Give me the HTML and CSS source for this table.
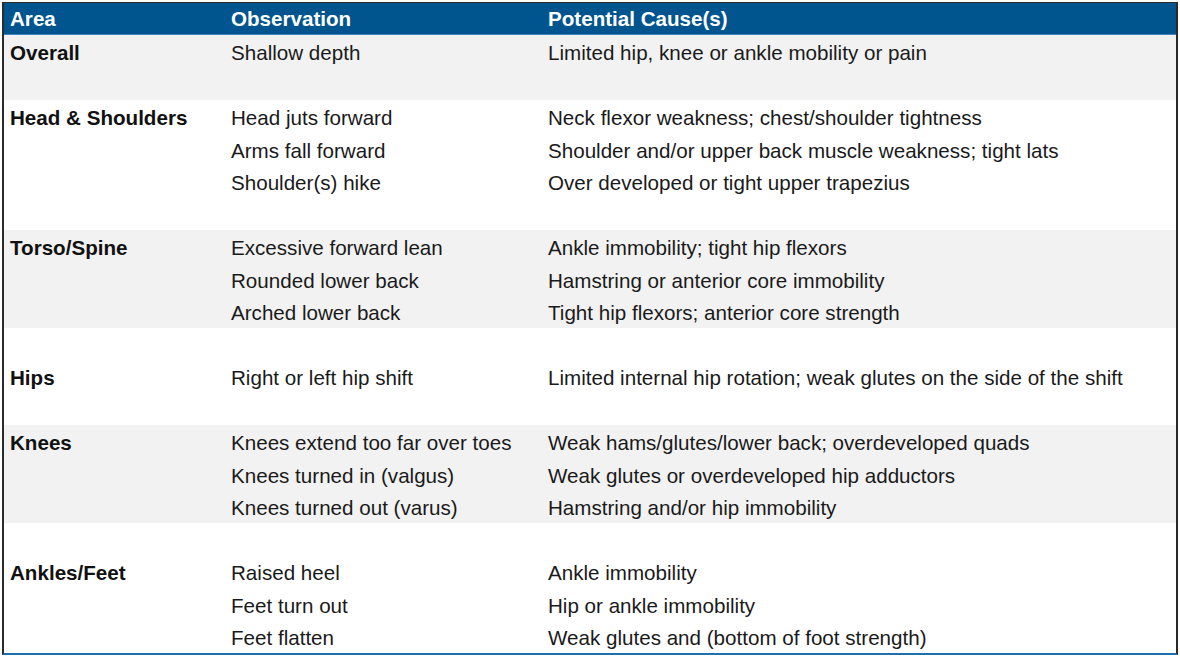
FILE: index.html
```html
<!DOCTYPE html>
<html>
<head>
<meta charset="utf-8">
<link rel="stylesheet" href="styles.css">
</head>
<body>
<div class="sheet">
  <div class="row head">
    <div class="c1">Area</div>
    <div class="c2">Observation</div>
    <div class="c3">Potential Cause(s)</div>
  </div>
  <div class="row gray">
    <div class="c1"><b>Overall</b></div>
    <div class="c2"><p>Shallow depth</p><p></p></div>
    <div class="c3"><p>Limited hip, knee or ankle mobility or pain</p></div>
  </div>
  <div class="row">
    <div class="c1"><b>Head &amp; Shoulders</b></div>
    <div class="c2"><p>Head juts forward</p><p>Arms fall forward</p><p>Shoulder(s) hike</p><p></p></div>
    <div class="c3"><p>Neck flexor weakness; chest/shoulder tightness</p><p>Shoulder and/or upper back muscle weakness; tight lats</p><p>Over developed or tight upper trapezius</p></div>
  </div>
  <div class="row gray">
    <div class="c1"><b>Torso/Spine</b></div>
    <div class="c2"><p>Excessive forward lean</p><p>Rounded lower back</p><p>Arched lower back</p></div>
    <div class="c3"><p>Ankle immobility; tight hip flexors</p><p>Hamstring or anterior core immobility</p><p>Tight hip flexors; anterior core strength</p></div>
  </div>
  <div class="row">
    <div class="c1"><p></p><b>Hips</b></div>
    <div class="c2"><p></p><p>Right or left hip shift</p><p></p></div>
    <div class="c3"><p></p><p>Limited internal hip rotation; weak glutes on the side of the shift</p></div>
  </div>
  <div class="row gray">
    <div class="c1"><b>Knees</b></div>
    <div class="c2"><p>Knees extend too far over toes</p><p>Knees turned in (valgus)</p><p>Knees turned out (varus)</p></div>
    <div class="c3"><p>Weak hams/glutes/lower back; overdeveloped quads</p><p>Weak glutes or overdeveloped hip adductors</p><p>Hamstring and/or hip immobility</p></div>
  </div>
  <div class="row">
    <div class="c1"><p></p><b>Ankles/Feet</b></div>
    <div class="c2"><p></p><p>Raised heel</p><p>Feet turn out</p><p>Feet flatten</p></div>
    <div class="c3"><p></p><p>Ankle immobility</p><p>Hip or ankle immobility</p><p>Weak glutes and (bottom of foot strength)</p></div>
  </div>
</div>
</body>
</html>
```

FILE: styles.css
```css
html, body {
  margin: 0;
  padding: 0;
  background: #ffffff;
}
body {
  font-family: "Liberation Sans", Arial, sans-serif;
  font-size: 20.6px;
  color: #1a1a1a;
}
.sheet {
  margin: 2px 0 0 2px;
  width: 1172px;
  border-top: 1px solid #2b2b2b;
  border-left: 2px solid #2b2b2b;
  border-right: 2px solid #2b2b2b;
  border-bottom: 2px solid #1f6fae;
}
.row {
  display: grid;
  grid-template-columns: 221px 317px 1fr;
  padding-left: 6px;
  line-height: 32.5px;
}
.row.head {
  background: #00558f;
  color: #ffffff;
  font-weight: bold;
  height: 31px;
  border-bottom: 1px solid #3d86c2;
  align-items: center;
}
.row.head div {
  line-height: 31px;
  padding-top: 0;
  margin-bottom: 0;
}
.row.gray {
  background: #f2f2f2;
}
.c1, .c2, .c3 {
  min-width: 0;
  white-space: nowrap;
  padding-top: 2px;
  margin-bottom: -2px;
}
.c1 b {
  display: block;
  font-weight: bold;
  color: #111111;
}
p {
  margin: 0;
  height: 32.5px;
}
```
